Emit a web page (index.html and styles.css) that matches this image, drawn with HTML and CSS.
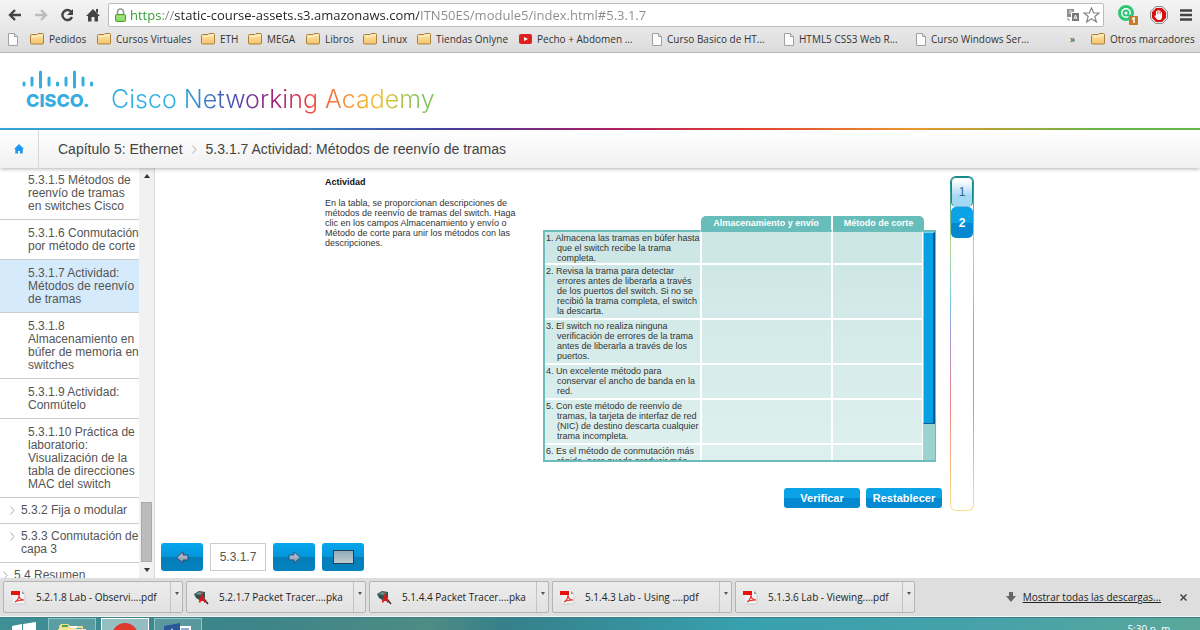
FILE: index.html
```html
<!DOCTYPE html>
<html lang="es">
<head>
    <meta charset="utf-8">
    <title>Cisco Networking Academy</title>
    <link rel="stylesheet" href="styles.css">
</head>
<body>
    <!-- shared icons -->
    <svg class="defs" width="0" height="0">
        <defs>
            <linearGradient id="gFolder" x1="0" y1="0" x2="0" y2="1"><stop offset="0" stop-color="#ffe6a8"/><stop offset="1" stop-color="#f6c36c"/></linearGradient>
            <linearGradient id="gArrow" x1="0" y1="0" x2="0" y2="1"><stop offset="0" stop-color="#c3cddb"/><stop offset="1" stop-color="#7f93a8"/></linearGradient>
            <linearGradient id="gScreen" x1="0" y1="0" x2="0" y2="1"><stop offset="0" stop-color="#8fa9b5"/><stop offset="1" stop-color="#c0ced3"/></linearGradient>
            <symbol id="folder" viewBox="0 0 14 12"><path d="M.5 10V2.500q0-1 1-1H7l1-1h4.500q1 0 1 1V10q0 1-1 1h-11q-1 0-1-1z" fill="url(#gFolder)" stroke="#a9803f"/><path d="M1.500 3.500H8l1-1h4" fill="none" stroke="#fff2cf"/></symbol>
            <symbol id="page" viewBox="0 0 10 13"><path d="M.5.5h6l3 3v9h-9z" fill="#fbfbfb" stroke="#a2a2a2"/><path d="M6.500.5v3h3" fill="#ddd" stroke="#a2a2a2"/></symbol>
            <symbol id="pdf" viewBox="0 0 15 15"><path d="M2 1h9l3 3v10H2z" fill="#f3f3f3"/><path d="M11 1l3 3h-3z" fill="#999"/><path d="M2 14h12V5" fill="none" stroke="#ccc"/><path d="M0 1h9v4H0z" fill="#e8120c"/><path d="M4 12c3-2 4-4 4-7 0 3 2 5 5 5-3 0-6 0-9 2" fill="none" stroke="#e8332d" stroke-width="1.200"/></symbol>
            <symbol id="pka" viewBox="0 0 15 15"><path d="M0 4l5-3 6 1v6l-4 3-5-3z" fill="#2f5450"/><path d="M1 4l4-2 5 1-4 2z" fill="#6c918b"/><path d="M10 9l4 5" stroke="#333" stroke-width="1.500"/><path d="M5.500 12.500L8 5l3 7.500M6.500 10h4" fill="none" stroke="#e01818" stroke-width="1.800"/></symbol>
        </defs>
    </svg>

    <div class="toolbar">
        <button class="tool" aria-label="Atrás"><svg width="14" height="12" viewBox="0 0 14 12"><path d="M7 1L2 6l5 5M2 6h11" fill="none" stroke="#444" stroke-width="2.400"/></svg></button>
        <button class="tool" aria-label="Adelante"><svg width="14" height="12" viewBox="0 0 14 12"><path d="M7 1l5 5-5 5M12 6H1" fill="none" stroke="#bdbdbd" stroke-width="2.400"/></svg></button>
        <button class="tool" aria-label="Recargar"><svg width="14" height="14" viewBox="0 0 14 14"><path d="M11 3.500A5 5 0 1 0 12 9" fill="none" stroke="#444" stroke-width="2.400"/><path d="M13 1v6H7z" fill="#444"/></svg></button>
        <button class="tool" aria-label="Inicio"><svg width="14" height="14" viewBox="0 0 14 14"><path d="M7 1l7 7h-2v5.500H8.500V9h-3v4.500H2V8H0z" fill="#444"/><path d="M10 1h2v4l-2-1z" fill="#444"/></svg></button>
        <div class="address">
            <svg width="11" height="14" viewBox="0 0 11 14"><path d="M2.500 7V4a3 3 0 0 1 6 0v3" fill="none" stroke="#9a9a9a" stroke-width="1.600"/><rect x=".5" y="6.500" width="10" height="7" rx="1" fill="#8ad763" stroke="#4e9a35"/><path d="M1.500 8.500h8M1.500 10.500h8" stroke="#a9e88a"/></svg>
            <input class="url" type="text" aria-label="Dirección" value="https://static-course-assets.s3.amazonaws.com/ITN50ES/module5/index.html#5.3.1.7">
            <svg width="12" height="12" viewBox="0 0 12 12"><path d="M0 0h7v3H4v5H0z" fill="#8b8b8b"/><path d="M1.500 2h4M3.500 1v1.500L1.500 5M3 4l1 1" stroke="#eee" fill="none" stroke-width=".8"/><path d="M5 4h7v8H5z" fill="#777"/><path d="M7 10l1.500-4L10 10M7.500 9h2" stroke="#fff" fill="none" stroke-width=".9"/><path d="M1 9v2h2" stroke="#888" fill="none"/></svg>
            <svg width="17" height="16" viewBox="0 0 17 16"><path d="M8.500 1l2.200 5h5.300l-4.200 3.500 1.600 5.500-4.900-3.200L3.600 15l1.600-5.500L1 6h5.300z" fill="#fff" stroke="#858585" stroke-width="1.200"/></svg>
        </div>
        <button class="tool" aria-label="Avast"><svg width="22" height="22" viewBox="0 0 22 22"><circle cx="10" cy="9" r="6.500" fill="#fff" stroke="#2fc677" stroke-width="3"/><circle cx="10" cy="9" r="2.500" fill="#fff" stroke="#2fc677" stroke-width="2"/><path d="M12 11q2 2 4-1" stroke="#2fc677" stroke-width="2" fill="none"/><rect x="13" y="12" width="9" height="9" rx="1" fill="#c27c2c"/><path d="M16 15l2-1v5" fill="none" stroke="#fff" stroke-width="1.500"/></svg></button>
        <button class="tool" aria-label="AdBlock"><svg width="18" height="18" viewBox="0 0 18 18"><path d="M5.500.7h7l4.800 4.800v7l-4.800 4.800h-7L.7 12.500v-7z" fill="#fff" stroke="#777"/><path d="M6 2h6l4 4v6l-4 4H6l-4-4V6z" fill="#d50f0f"/><path d="M6 9V5h1v3h.5V4h1.200v4h.5V4.500h1.200V8h.5V6h1.100v5q0 3-3 3-2.500 0-4.500-4l1-.5z" fill="#fff"/></svg></button>
        <button class="tool" aria-label="Menú"><svg width="12" height="12" viewBox="0 0 12 12"><path d="M0 1.500h12M0 6h12M0 10.500h12" stroke="#444" stroke-width="2.400"/></svg></button>
    </div>

    <nav class="bookmarks">
        <a href="#" aria-label="Página"><svg width="10" height="13"><use href="#page"/></svg></a>
        <a href="#"><svg width="14" height="12"><use href="#folder"/></svg>Pedidos</a>
        <a href="#"><svg width="14" height="12"><use href="#folder"/></svg>Cursos Virtuales</a>
        <a href="#"><svg width="14" height="12"><use href="#folder"/></svg>ETH</a>
        <a href="#"><svg width="14" height="12"><use href="#folder"/></svg>MEGA</a>
        <a href="#"><svg width="14" height="12"><use href="#folder"/></svg>Libros</a>
        <a href="#"><svg width="14" height="12"><use href="#folder"/></svg>Linux</a>
        <a href="#"><svg width="14" height="12"><use href="#folder"/></svg>Tiendas Onlyne</a>
        <a href="#"><svg width="13" height="10" viewBox="0 0 13 10"><rect width="13" height="10" rx="2" fill="#e02020"/><path d="M5 3l4 2-4 2z" fill="#fff"/></svg>Pecho + Abdomen ...</a>
        <a href="#"><svg width="10" height="13"><use href="#page"/></svg>Curso Basico de HT...</a>
        <a href="#"><svg width="10" height="13"><use href="#page"/></svg>HTML5 CSS3 Web R...</a>
        <a href="#"><svg width="10" height="13"><use href="#page"/></svg>Curso Windows Ser...</a>
        <span class="more">»</span>
        <a href="#"><svg width="14" height="12"><use href="#folder"/></svg>Otros marcadores</a>
    </nav>

    <header class="brand">
        <div class="logo">
            <svg width="72" height="20" viewBox="0 0 72 20"><path d="M2 13v2M10 8v7M18.500 2v15M27 8v7M35.500 13v2M44 8v7M52.500 2v15M61 8v7M69.500 13v2" stroke="#35ade0" stroke-width="3" stroke-linecap="round"/></svg>
            <span>CISCO.</span>
        </div>
        <h1>Cisco Networking Academy</h1>
    </header>

    <div class="crumbs">
        <a href="#" class="home" aria-label="Inicio"><svg width="10" height="10" viewBox="0 0 10 10"><path d="M5 0l5 5H8.700v4.500H6V7H4v2.500H1.300V5H0z" fill="#1c97f3"/></svg></a>
        <a href="#">Capítulo 5: Ethernet</a>
        <svg width="5" height="9" viewBox="0 0 5 9"><path d="M.5.5l3.500 4-3.500 4" fill="none" stroke="#aaa"/></svg>
        <a href="#">5.3.1.7 Actividad: Métodos de reenvío de tramas</a>
    </div>

    <div class="content">
        <aside class="sidebar">
            <ul class="menu">
                <li><a href="#">5.3.1.5 Métodos de reenvío de tramas en switches Cisco</a></li>
                <li><a href="#">5.3.1.6 Conmutación por método de corte</a></li>
                <li class="active"><a href="#">5.3.1.7 Actividad: Métodos de reenvío de tramas</a></li>
                <li><a href="#">5.3.1.8 Almacenamiento en búfer de memoria en switches</a></li>
                <li><a href="#">5.3.1.9 Actividad: Conmútelo</a></li>
                <li><a href="#">5.3.1.10 Práctica de laboratorio: Visualización de la tabla de direcciones MAC del switch</a></li>
                <li class="section"><svg width="5" height="9" viewBox="0 0 5 9"><path d="M.5.5l3.500 4-3.500 4" fill="none" stroke="#aaa"/></svg><a href="#">5.3.2 Fija o modular</a></li>
                <li class="section"><svg width="5" height="9" viewBox="0 0 5 9"><path d="M.5.5l3.500 4-3.500 4" fill="none" stroke="#aaa"/></svg><a href="#">5.3.3 Conmutación de capa 3</a></li>
                <li class="section chapter"><svg width="5" height="9" viewBox="0 0 5 9"><path d="M.5.5l3.500 4-3.500 4" fill="none" stroke="#aaa"/></svg><a href="#">5.4 Resumen</a></li>
            </ul>
            <div class="scroll">
                <svg width="6" height="4" viewBox="0 0 6 4"><path d="M3 0l3 4H0z" fill="#333"/></svg>
                <div class="thumb"></div>
                <svg width="6" height="4" viewBox="0 0 6 4"><path d="M3 4l3-4H0z" fill="#333"/></svg>
            </div>
        </aside>

        <main>
            <div class="stage">
                <section class="intro">
                    <h2>Actividad</h2>
                    <p>En la tabla, se proporcionan descripciones de métodos de reenvío de tramas del switch. Haga clic en los campos Almacenamiento y envío o Método de corte para unir los métodos con las descripciones.</p>
                </section>

                <section class="activity">
                    <div class="grid">
                        <table>
                            <thead>
                                <tr><td></td><th scope="col">Almacenamiento y envío</th><th scope="col">Método de corte</th></tr>
                            </thead>
                            <tbody>
                                <tr class="h3"><td><p>1. Almacena las tramas en búfer hasta que el switch recibe la trama completa.</p></td><td></td><td></td></tr>
                                <tr class="h5"><td><p>2. Revisa la trama para detectar errores antes de liberarla a través de los puertos del switch. Si no se recibió la trama completa, el switch la descarta.</p></td><td></td><td></td></tr>
                                <tr class="h4"><td><p>3. El switch no realiza ninguna verificación de errores de la trama antes de liberarla a través de los puertos.</p></td><td></td><td></td></tr>
                                <tr class="h3"><td><p>4. Un excelente método para conservar el ancho de banda en la red.</p></td><td></td><td></td></tr>
                                <tr class="h4"><td><p>5. Con este método de reenvío de tramas, la tarjeta de interfaz de red (NIC) de destino descarta cualquier trama incompleta.</p></td><td></td><td></td></tr>
                                <tr class="h3"><td><p>6. Es el método de conmutación más rápido, pero puede producir más errores.</p></td><td></td><td></td></tr>
                            </tbody>
                        </table>
                        <div class="track"><div class="bar"></div></div>
                    </div>
                    <div class="actions">
                        <button>Verificar</button>
                        <button>Restablecer</button>
                    </div>
                </section>

                <div class="pages">
                    <button>1</button>
                    <button class="current">2</button>
                </div>
            </div>

            <div class="pager">
                <button aria-label="Anterior"><svg width="13" height="13" viewBox="0 0 13 13"><path d="M.7 6.500L7 .8v3.200h5v5H7v3.200z" fill="url(#gArrow)" stroke="#304a66"/></svg></button>
                <input type="text" aria-label="Página" value="5.3.1.7">
                <button aria-label="Siguiente"><svg width="13" height="13" viewBox="0 0 13 13"><path d="M12.300 6.500L6 .8v3.200H1v5h5v3.200z" fill="url(#gArrow)" stroke="#1c5a7c"/></svg></button>
                <button aria-label="Pantalla"><svg width="21" height="14" viewBox="0 0 21 14"><rect x=".5" y=".5" width="20" height="13" fill="url(#gScreen)" stroke="#1f3f52"/></svg></button>
            </div>
        </main>
    </div>

    <div class="downloads">
        <div class="file"><button><svg width="15" height="15"><use href="#pdf"/></svg>5.2.1.8 Lab - Observi....pdf</button><button class="drop" aria-label="Opciones"></button></div>
        <div class="file"><button><svg width="15" height="15"><use href="#pka"/></svg>5.2.1.7 Packet Tracer....pka</button><button class="drop" aria-label="Opciones"></button></div>
        <div class="file"><button><svg width="15" height="15"><use href="#pka"/></svg>5.1.4.4 Packet Tracer....pka</button><button class="drop" aria-label="Opciones"></button></div>
        <div class="file"><button><svg width="15" height="15"><use href="#pdf"/></svg>5.1.4.3 Lab - Using ....pdf</button><button class="drop" aria-label="Opciones"></button></div>
        <div class="file"><button><svg width="15" height="15"><use href="#pdf"/></svg>5.1.3.6 Lab - Viewing....pdf</button><button class="drop" aria-label="Opciones"></button></div>
        <div class="all">
            <svg width="10" height="10" viewBox="0 0 10 10"><path d="M3 0h4v4h3l-5 6-5-6h3z" fill="#666"/></svg>
            <a href="#">Mostrar todas las descargas...</a>
            <button aria-label="Cerrar"><svg width="7" height="7" viewBox="0 0 7 7"><path d="M.5.5l6 6M6.500.5l-6 6" stroke="#444" stroke-width="1.500"/></svg></button>
        </div>
    </div>

    <footer class="taskbar">
        <button aria-label="Inicio"><svg width="24" height="24" viewBox="0 0 24 24"><path d="M0 4l10-2v10H0zM11 2l13-2v12H11zM0 13h10v9l-10-1zM11 13h13v11l-13-2z" fill="#fff"/></svg></button>
        <button class="open" aria-label="Explorador"><svg width="28" height="24" viewBox="0 0 28 24"><path d="M1 3l2-2h7l2 2h13v20H1z" fill="#f3dc8c"/><path d="M4 2h6v2H4z" fill="#3cb04a"/><path d="M12 3h7v2h-7z" fill="#fff"/><path d="M18 5h6v2h-6z" fill="#4b9ce0"/><path d="M0 6h28v18H0z" fill="#f8e7a4"/></svg></button>
        <button class="open focus" aria-label="Chrome"><svg width="26" height="26" viewBox="0 0 26 26"><circle cx="13" cy="13" r="13" fill="#dd3a2c"/><circle cx="13" cy="14" r="6" fill="#fff"/></svg></button>
        <button class="open" aria-label="Word"><svg width="28" height="24" viewBox="0 0 28 24"><path d="M14 3h13v21H14z" fill="#fff"/><path d="M17 6h8M17 9h8" stroke="#2b579a"/><path d="M0 3l16-3v24H0z" fill="#2b579a"/><path d="M3 8l2 9 3-9 3 9 2-9" fill="none" stroke="#fff" stroke-width="2"/></svg></button>
        <time>5:30 p. m.</time>
    </footer>
</body>
</html>
```
FILE: styles.css
```css
* {
    box-sizing: border-box;
}

body {
    margin: 0;
    height: 100vh;
    display: flex;
    flex-direction: column;
    overflow: hidden;
    background: #fff;
    font-family: "Liberation Sans", Arial, sans-serif;
    font-size: 12px;
    color: #555;
}

a {
    color: inherit;
    text-decoration: none;
}

button {
    margin: 0;
    padding: 0;
    border: none;
    background: none;
    font: inherit;
    color: inherit;
    cursor: pointer;
}

svg {
    display: block;
    flex: none;
}

.defs {
    position: absolute;
}

/* browser chrome */
.toolbar {
    flex: none;
    display: flex;
    align-items: center;
    gap: 12px;
    height: 28px;
    padding: 2px 8px 0;
    background: linear-gradient(#f4f4f4, #e8e8e8);
}

.address {
    flex: 1;
    display: flex;
    align-items: center;
    gap: 4px;
    height: 24px;
    margin-left: -4px;
    padding: 0 3px 0 6px;
    border: 1px solid #bdbdbd;
    border-radius: 2px;
    background: #fff;
}

.url {
    flex: 1;
    min-width: 0;
    height: 20px;
    padding: 0;
    border: none;
    outline: none;
    font-family: "Open Sans", "Noto Sans", sans-serif;
    font-size: 13px;
    /* scheme, host and path each have their own colour */
    background: linear-gradient(90deg, #2c9a2c 32px, #8a8a8a 32px, #8a8a8a 45px, #222 45px, #222 289px, #8a8a8a 289px);
    background-clip: text;
    -webkit-background-clip: text;
    -webkit-text-fill-color: transparent;
}

.bookmarks {
    flex: none;
    display: grid;
    grid-template-columns: 22px 67px 104px 47px 58px 57px 54px 102px 133px 132px 132px 1fr 21px 109px;
    align-items: center;
    height: 25px;
    padding: 0 0 2px 8px;
    border-bottom: 1px solid #b9b9b9;
    background: linear-gradient(#e8e8e8, #dcdcdc);
    font-family: "Open Sans", "Noto Sans", sans-serif;
    font-size: 10px;
    color: #333;
    white-space: nowrap;
}

.bookmarks a {
    display: flex;
    align-items: center;
    gap: 5px;
}

/* brand header */
.brand {
    flex: none;
    display: flex;
    align-items: flex-start;
    gap: 17px;
    height: 77px;
    padding: 17px 22px 0;
    border-bottom: 2px solid;
    border-image: linear-gradient(90deg, #35ade0 20%, #4a3fa0 38%, #b0206e 50%, #ef4035 62%, #f6a030 76%, #6cbf4b 92%) 1;
}

.logo {
    width: 72px;
}

.logo span {
    display: block;
    padding-left: 4px;
    font-family: Inter, sans-serif;
    font-size: 18px;
    font-weight: 800;
    line-height: 22px;
    color: #35ade0;
}

.brand h1 {
    margin: 12px 0 0;
    font-family: Inter, sans-serif;
    font-size: 25px;
    font-weight: 300;
    line-height: 34px;
    color: transparent;
    background: linear-gradient(90deg, #2fb0e2 20%, #4a4fae 38%, #9c1f7c 50%, #ee4a3c 62%, #f49a35 74%, #f0c22e 82%, #7fc35c 96%);
    background-clip: text;
    -webkit-background-clip: text;
}

.crumbs {
    flex: none;
    position: relative;
    display: flex;
    align-items: center;
    height: 38px;
    gap: 9px;
    background: linear-gradient(#fff, #f0f0f0);
    box-shadow: 0 1px 4px rgba(0, 0, 0, 0.3);
    font-size: 14px;
    color: #444;
}

.home {
    display: flex;
    align-items: center;
    justify-content: center;
    width: 39px;
    height: 38px;
    margin-right: 10px;
    border-right: 1px solid #d8d8d8;
}

/* page content */
.content {
    flex: 1;
    display: flex;
    min-height: 0;
}

.sidebar {
    flex: none;
    display: flex;
    width: 155px;
    border-right: 1px solid #d8d8d8;
    overflow: hidden;
}

.menu {
    flex: 1;
    margin: 0;
    padding: 0;
    list-style: none;
    line-height: 13px;
}

.menu li {
    padding: 7px 0 6px 28px;
    border-bottom: 1px solid #ccc;
}

.menu li:first-child {
    padding-top: 6px;
}

.menu .active {
    background: #d5ebfc;
}

.menu .section {
    display: flex;
    gap: 6px;
    padding: 6px 0 6px 10px;
}

.menu .section svg {
    margin-top: 2px;
}

.menu .chapter {
    padding-left: 3px;
}

.scroll {
    display: flex;
    flex-direction: column;
    align-items: center;
    width: 15px;
    padding: 6px 0;
    background: #f1f1f1;
}

.thumb {
    width: 11px;
    height: 60px;
    margin: auto 0 6px;
    background: #bcbcbc;
    border: 1px solid #a8a8a8;
}

main {
    flex: 1;
    display: flex;
    flex-direction: column;
    justify-content: space-between;
    min-width: 0;
    padding: 8px 6px 7px;
}

.stage {
    display: flex;
    padding-left: 164px;
    font-size: 9px;
    line-height: 10px;
    color: #333;
}

.intro {
    width: 200px;
    margin-right: 18px;
}

.intro h2 {
    margin: 1px 0 11px;
    font-size: 9px;
    line-height: 10px;
    color: #111;
}

.intro p {
    margin: 0;
}

.activity {
    width: 399px;
    padding-top: 40px;
}

.grid {
    position: relative;
    height: 246px;
    margin-right: 6px;
    overflow: hidden;
    border-bottom: 2px solid #6abdba;
}

/* left edge of the table body, unbroken by the row lines */
.grid::before {
    content: "";
    position: absolute;
    top: 14px;
    bottom: 0;
    left: 0;
    width: 2px;
    background: #6abdba;
}

.grid table {
    width: 381px;
    border-collapse: separate;
    border-spacing: 0;
    table-layout: fixed;
}

.grid thead td {
    width: 158px;
    padding: 0;
}

.grid th {
    height: 14px;
    padding: 0;
    background: #66bdba;
    color: #fff;
    line-height: 14px;
}

.grid th:nth-child(2) {
    width: 132px;
    border-right: 2px solid #fff;
    border-top-left-radius: 5px;
}

.grid th:last-child {
    border-top-right-radius: 5px;
}

.grid tbody {
    background: linear-gradient(#cbe6e5, #e0f1ef);
}

.grid tbody td {
    padding: 0;
    border-right: 2px solid #fff;
    border-bottom: 2px solid #fff;
    vertical-align: top;
}

.grid tbody td:first-child {
    border-right-width: 1px;
    box-shadow: 1px 0 #fff;
}

.grid tbody tr:first-child td {
    border-top: 2px solid #6abdba;
}

.grid tbody p {
    margin: 1px -1px 0 3px;
    padding-left: 11px;
    text-indent: -11px;
}

.h3 {
    height: 35px;
}

.h4 {
    height: 45px;
}

.h5 {
    height: 55px;
}

.track {
    position: absolute;
    top: 14px;
    right: 0;
    bottom: 0;
    width: 13px;
    border-top: 2px solid #6abdba;
    border-right: 1px solid #6abdba;
    background: #9bd3d0;
}

.bar {
    height: 84%;
    border: 1px solid #0b5d93;
    border-top-color: #7fd0f5;
    border-left-color: #7fd0f5;
    border-right-width: 2px;
    background: #06a0e3;
}

.actions {
    display: flex;
    justify-content: flex-end;
    gap: 6px;
    padding-top: 26px;
}

.actions button {
    width: 76px;
    height: 20px;
    border-radius: 3px;
    background: linear-gradient(#0ba2e6 50%, #0488d0 50%);
    color: #fff;
    font-size: 11px;
    font-weight: bold;
}

.pages {
    display: flex;
    flex-direction: column;
    width: 24px;
    height: 335px;
    margin-left: 8px;
    border: 1px solid transparent;
    border-radius: 6px;
    background: linear-gradient(#fff, #fff) padding-box, linear-gradient(#178a8c, #b5dc8c 20%, #7cc6e6 38%, #a296d0 48%, #ef8585 68%, #f8e08c) border-box;
}

.pages button {
    height: 30px;
    border: 1px solid #178a8c;
    border-bottom-color: #7ab8dc;
    border-radius: 5px;
    background: linear-gradient(#fff 10%, #a5d8f2 65%);
    color: #36688a;
    font-size: 12px;
}

.pages .current {
    height: 31px;
    border: none;
    background: linear-gradient(#0ba2e6 50%, #0488d0 50%);
    color: #fff;
    font-weight: bold;
}

.pager {
    display: flex;
    gap: 7px;
}

.pager button {
    display: flex;
    align-items: center;
    justify-content: center;
    width: 42px;
    height: 28px;
    border-radius: 3px;
    background: linear-gradient(#05a6ee, #0596da 50%, #047db9 50%, #0483c0);
}

.pager input {
    width: 56px;
    height: 28px;
    padding: 0;
    border: 1px solid #ccc;
    font: 12px "Liberation Sans", Arial, sans-serif;
    color: #555;
    text-align: center;
}

/* downloads bar */
.downloads {
    flex: none;
    display: flex;
    align-items: center;
    gap: 3px;
    height: 39px;
    padding: 0 13px 0 3px;
    border-bottom: 1px solid #f4f4f4;
    background: #dedede;
    font-family: "Open Sans", "Noto Sans", sans-serif;
    font-size: 10px;
    color: #222;
    white-space: nowrap;
}

.file {
    display: flex;
    width: 180px;
    height: 32px;
    border: 1px solid #b4b4b4;
    border-radius: 2px;
    background: linear-gradient(#ececec, #e2e2e2);
}

.file button {
    flex: 1;
    display: flex;
    align-items: center;
    gap: 10px;
    padding-left: 7px;
}

.file .drop {
    flex: none;
    justify-content: center;
    width: 12px;
    padding: 0 0 8px;
    border-left: 1px solid #c4c4c4;
}

.drop::before {
    content: "";
    border: 2px solid transparent;
    border-top: 3px solid #555;
    border-bottom: none;
}

.all {
    display: flex;
    align-items: center;
    gap: 7px;
    margin-left: auto;
}

.all a {
    text-decoration: underline;
}

.all button {
    margin-left: 12px;
}

/* task bar */
.taskbar {
    flex: none;
    display: flex;
    align-items: flex-start;
    height: 13px;
    overflow: hidden;
    border-top: 1px solid #3a8088;
    background: linear-gradient(90deg, #3f8f96, #3c8489 20%, #4e8c84 36%, #35808a 42%, #38a0ae 62%, #48a2a8 84%, #5aa89a);
    color: #fff;
}

.taskbar button {
    display: flex;
    justify-content: center;
    width: 48px;
    height: 40px;
    padding-top: 4px;
}

.taskbar .open {
    margin-right: 5px;
    border: 1px solid #8fc4c8;
    border-bottom: none;
    background: rgba(255, 255, 255, 0.15);
}

.taskbar .focus {
    background: rgba(255, 255, 255, 0.45);
    border-color: #fff;
}

.taskbar time {
    margin: 3px 27px 0 auto;
    font-family: "Open Sans", "Noto Sans", sans-serif;
    font-size: 10px;
    line-height: 16px;
}
```
